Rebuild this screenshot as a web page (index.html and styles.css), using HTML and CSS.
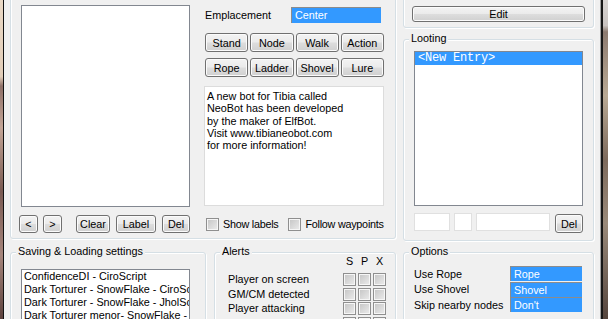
FILE: index.html
```html
<!DOCTYPE html>
<html lang="en">
<head>
    <title>Cavebot</title>
    <link rel="stylesheet" href="styles.css">
</head>
<body>
    <div class="screen">
        <div class="desk desk-left"></div>
        <div class="edge-left"></div>

        <div class="window">
            <div class="col-left">
                <div class="group group-path">
                    <div class="path-side">
                        <div class="listbox path-list"></div>
                        <div class="nav-row">
                            <div class="btn-set">
                                <button class="btn btn-nav">&lt;</button>
                                <button class="btn btn-nav">&gt;</button>
                            </div>
                            <div class="btn-set">
                                <button class="btn btn-clear">Clear</button>
                                <button class="btn btn-label">Label</button>
                                <button class="btn btn-del">Del</button>
                            </div>
                        </div>
                    </div>

                    <div class="path-tools">
                        <div class="place-row">
                            <span>Emplacement</span>
                            <div class="combo combo-place">Center</div>
                        </div>
                        <div class="type-grid">
                            <button class="btn">Stand</button>
                            <button class="btn">Node</button>
                            <button class="btn">Walk</button>
                            <button class="btn">Action</button>
                            <button class="btn">Rope</button>
                            <button class="btn">Ladder</button>
                            <button class="btn">Shovel</button>
                            <button class="btn">Lure</button>
                        </div>
                        <div class="memo">
                            A new bot for Tibia called<br>
                            NeoBot has been developed<br>
                            by the maker of ElfBot.<br>
                            Visit www.tibianeobot.com<br>
                            for more information!
                        </div>
                        <div class="check-row">
                            <label class="check-label"><span class="check"></span>Show labels</label>
                            <label class="check-label"><span class="check"></span>Follow waypoints</label>
                        </div>
                    </div>
                </div>

                <div class="bottom-row">
                    <div class="group group-saving">
                        <span class="legend">Saving &amp; Loading settings</span>
                        <div class="listbox saving-list">
                            <div class="item">ConfidenceDI - CiroScript</div>
                            <div class="item">Dark Torturer - SnowFlake - CiroScript</div>
                            <div class="item">Dark Torturer - SnowFlake - JholScript</div>
                            <div class="item">Dark Torturer menor- SnowFlake - JholScript</div>
                            <div class="item">Dragon Lords - CiroScript</div>
                        </div>
                    </div>

                    <div class="group group-alerts">
                        <span class="legend">Alerts</span>
                        <div class="alert-head">
                            <span>S</span><span>P</span><span>X</span>
                        </div>
                        <div class="alert-rows">
                            <div class="alert-row">
                                <span class="alert-name">Player on screen</span>
                                <span class="check"></span><span class="check"></span><span class="check"></span>
                            </div>
                            <div class="alert-row">
                                <span class="alert-name">GM/CM detected</span>
                                <span class="check"></span><span class="check"></span><span class="check"></span>
                            </div>
                            <div class="alert-row">
                                <span class="alert-name">Player attacking</span>
                                <span class="check"></span><span class="check"></span><span class="check"></span>
                            </div>
                            <div class="alert-row">
                                <span class="alert-name">Low health</span>
                                <span class="check"></span><span class="check"></span><span class="check"></span>
                            </div>
                        </div>
                    </div>
                </div>
            </div>

            <div class="col-right">
                <div class="group group-edit">
                    <button class="btn btn-edit">Edit</button>
                </div>

                <div class="group group-looting">
                    <span class="legend">Looting</span>
                    <div class="listbox loot-list">
                        <div class="loot-item selected">&lt;New Entry&gt;</div>
                    </div>
                    <div class="loot-edit">
                        <div class="textbox tb-id"></div>
                        <div class="textbox tb-count"></div>
                        <div class="textbox tb-name"></div>
                        <button class="btn btn-loot-del">Del</button>
                    </div>
                </div>

                <div class="group group-options">
                    <span class="legend">Options</span>
                    <div class="option-rows">
                        <div class="option-row">
                            <span>Use Rope</span>
                            <div class="combo combo-opt">Rope</div>
                        </div>
                        <div class="option-row">
                            <span>Use Shovel</span>
                            <div class="combo combo-opt">Shovel</div>
                        </div>
                        <div class="option-row">
                            <span>Skip nearby nodes</span>
                            <div class="combo combo-opt">Don't</div>
                        </div>
                    </div>
                </div>
            </div>
        </div>

        <div class="edge-right"></div>
        <div class="desk desk-right"></div>
    </div>
</body>
</html>
```

FILE: styles.css
```css
*{
    margin: 0;
    box-sizing: border-box;
}
body{
    width: 608px;
    height: 319px;
    overflow: hidden;
    background-color: #f0f0f0;
    font-family: "Liberation Sans", Arial, sans-serif;
    font-size: 10.8px;
    color: #000;
}

.screen{
    display: flex;
    height: 319px;
    overflow: hidden;
}
.desk-left{
    width: 3px;
    background: linear-gradient(#ead8c4 0%, #e2cdb8 24%, #8f7068 27%, #c4a596 40%, #7a5a52 60%, #a5847a 80%, #5c413c 100%);
}
.edge-left{
    width: 1px;
    background-color: #111;
}
.edge-right{
    width: 3px;
    border-left: 1px solid #a3a3a3;
    background-color: #161616;
}
.desk-right{
    width: 5px;
    background: linear-gradient(#d8d4d2 0%, #c9c3c0 8%, #8d7b70 10%, #b9a994 30%, #7d6a5c 50%, #9a8a7a 70%, #54443c 100%);
}

.window{
    flex: 1;
    display: flex;
    align-items: flex-start;
    gap: 7px;
    padding: 0 6px;
    margin-top: -20px;
    background-color: #f0f0f0;
}
.col-left{
    width: 386px;
    display: flex;
    flex-direction: column;
    gap: 13px;
}
.col-right{
    width: 191px;
    display: flex;
    flex-direction: column;
    gap: 11px;
}

/* group boxes */
.group{
    display: flex;
    flex-direction: column;
    border: 1px solid #d5dfe5;
    border-radius: 3px;
    box-shadow: inset 1px 1px 0 #fff, 1px 1px 0 #fff;
}
.legend{
    align-self: flex-start;
    margin: -8px 0 0 -5px;
    padding: 0 2px;
    line-height: 13px;
    background-color: #f0f0f0;
}

/* buttons */
.btn{
    font-family: "Liberation Sans", Arial, sans-serif;
    font-size: 10.8px;
    color: #000;
    padding: 0;
    border: 1px solid #707070;
    border-radius: 3px;
    background: linear-gradient(#f3f3f3 0%, #ebebeb 48%, #dddddd 52%, #d0d0d0 100%);
    box-shadow: inset 0 0 0 1px #fbfbfb;
}

.listbox{
    background-color: #fff;
    border: 1px solid #828790;
    overflow: hidden;
}
.check{
    display: inline-block;
    width: 13px;
    height: 13px;
    border: 1px solid #8f8f8f;
    background: linear-gradient(135deg, #c4c4c4, #ececec);
    box-shadow: inset 0 0 0 1px #f6f6f6;
    flex-shrink: 0;
}
.combo{
    background-color: #3399ff;
    color: #fff;
    border-top: 1px solid #8c8c8c;
    border-left: 1px solid #8c8c8c;
    padding-left: 3px;
    white-space: nowrap;
}

/* path group */
.group-path{
    flex-direction: row;
    gap: 14px;
    padding: 24px 11px 5px 10px;
}
.path-side{
    width: 169px;
    display: flex;
    flex-direction: column;
    gap: 8px;
}
.path-list{
    height: 202px;
}
.nav-row{
    display: flex;
    justify-content: space-between;
    height: 18px;
    margin-left: -2px;
}
.btn-set{
    display: flex;
    gap: 6px;
}
.btn-set:first-child{
    gap: 5px;
}
.btn-nav{
    width: 19px;
}
.btn-clear{
    width: 34px;
}
.btn-label{
    width: 40px;
}
.btn-del{
    width: 28px;
}

.path-tools{
    width: 180px;
    display: flex;
    flex-direction: column;
}
.place-row{
    display: flex;
    align-items: center;
    justify-content: space-between;
    height: 16px;
    margin-top: 2px;
    padding-left: 1px;
}
.combo-place{
    width: 90px;
    height: 16px;
    line-height: 15px;
    margin-right: 3px;
}
.type-grid{
    display: grid;
    grid-template-columns: repeat(4, 1fr);
    gap: 6px 2px;
    margin-top: 10px;
    padding-left: 1px;
}
.type-grid .btn{
    height: 19px;
}
.memo{
    height: 120px;
    margin-top: 9px;
    padding: 3px 2px;
    line-height: 12.3px;
    background-color: #fff;
    border: 1px solid #dcdcdc;
}
.check-row{
    display: flex;
    align-items: center;
    gap: 10px;
    height: 13px;
    margin-top: 12px;
    padding-left: 2px;
}
.check-label{
    display: flex;
    align-items: center;
    flex-shrink: 0;
    gap: 4px;
    line-height: 13px;
    letter-spacing: -0.25px;
    white-space: nowrap;
}

/* saving & alerts */
.bottom-row{
    display: flex;
    gap: 8px;
}
.group-saving{
    width: 196px;
    height: 90px;
    padding: 0 15px 0 10px;
}
.saving-list{
    width: 169px;
    height: 70px;
    margin-top: 11px;
    padding: 0 2px;
    line-height: 13px;
    white-space: nowrap;
}

.group-alerts{
    flex: 1;
    height: 90px;
}
.group-alerts .legend{
    margin-left: 5px;
}
.alert-head{
    display: flex;
    justify-content: flex-end;
    gap: 2px;
    margin-top: -3px;
    padding-right: 9px;
    line-height: 13px;
}
.alert-head span{
    width: 13px;
    text-align: center;
}
.alert-rows{
    display: flex;
    flex-direction: column;
    gap: 1.5px;
    margin-top: 5px;
    padding: 0 9px 0 13px;
}
.alert-row{
    display: flex;
    align-items: center;
    gap: 2px;
    height: 13px;
    line-height: 13px;
}
.alert-name{
    flex: 1;
}

/* right column */
.group-edit{
    padding: 25px 8px 5px 8px;
}
.btn-edit{
    height: 16px;
}

.group-looting{
    padding: 0 10px 7px 10px;
}
.loot-list{
    height: 155px;
    margin-top: 6px;
}
.loot-item{
    height: 13px;
    padding-left: 3px;
    font-family: "Liberation Mono", "Courier New", monospace;
    font-size: 12px;
    letter-spacing: -0.2px;
    line-height: 13px;
}
.selected{
    background-color: #3399ff;
    color: #fff;
}
.loot-edit{
    display: flex;
    align-items: flex-start;
    gap: 4px;
    margin-top: 7px;
}
.textbox{
    height: 18px;
    background-color: #fff;
    border: 1px solid #e0e0e0;
}
.tb-id{
    width: 36px;
}
.tb-count{
    width: 18px;
}
.tb-name{
    width: 75px;
}
.btn-loot-del{
    width: 28px;
    height: 19px;
    margin: 1px 0 0 1px;
}

.group-options{
    height: 90px;
    padding: 0 11px 0 10px;
}
.option-rows{
    display: flex;
    flex-direction: column;
    gap: 0.5px;
    margin-top: 8px;
}
.option-row{
    display: flex;
    align-items: center;
    justify-content: space-between;
    height: 15px;
}
.combo-opt{
    width: 72px;
    height: 15px;
    line-height: 14px;
}
```
